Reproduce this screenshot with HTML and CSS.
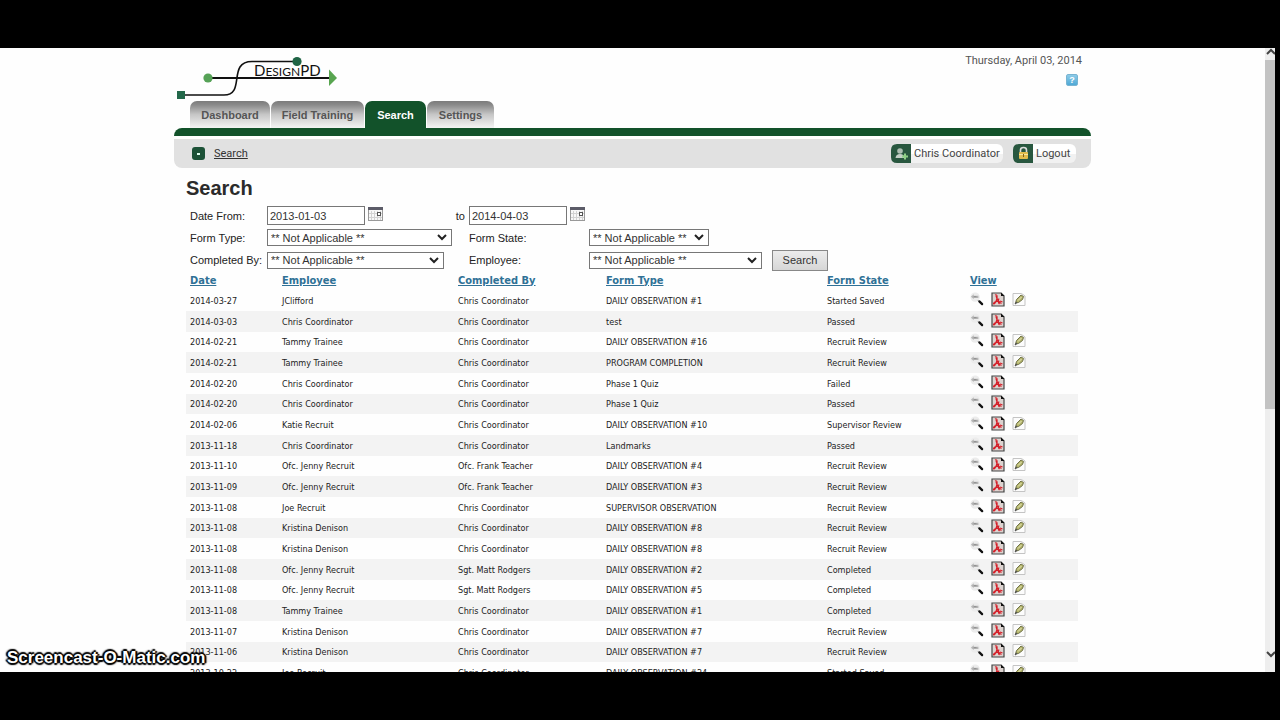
FILE: index.html
```html
<!DOCTYPE html>
<html lang="en">
<head>
    <meta charset="UTF-8">
    <meta name="viewport" content="width=device-width, initial-scale=1.0">
    <title>DesignPD - Search</title>
    <link rel="stylesheet" href="styles.css">
</head>
<body>
    <!-- shared icons -->
    <svg class="sprite" aria-hidden="true">
        <symbol id="icon-view" viewBox="0 0 15 15">
            <circle cx="5.500" cy="5" r="5" fill="#ececec"/>
            <path d="M1 4.500 L4 2 V3.500 H9 V6 H4 V7 Z" fill="#b5b5b5"/>
            <path d="M4 4.500 H7" stroke="#888" stroke-width="1"/>
            <path d="M8 8 L10 10" stroke="#bbb" stroke-width="1"/>
            <path d="M10 9.500 L13 12.500" stroke="#111" stroke-width="2.400" stroke-linecap="round"/>
        </symbol>
        <symbol id="icon-pdf" viewBox="0 0 14 15">
            <path d="M1 1 H10 L13 4 V14 H1 Z" fill="#dcd3d0" stroke="#444" stroke-width="1.200"/>
            <path d="M10 0.500 V4 H13.500 Z" fill="#111"/>
            <path d="M4 3 C6.500 2 6.500 5 5.500 8 C4.500 11 3 13 2.500 11.500 C3 9.500 6 9 8 9.500 M5 4 C6 7 8 10.500 10.500 11.500 M8 6.500 C7 8.500 7.500 11 8.500 12 M9 9 L11.500 10" fill="none" stroke="#d4202a" stroke-width="1.200"/>
        </symbol>
        <symbol id="icon-edit" viewBox="0 0 13 15">
            <path d="M0.500 1.500 H9 L12.500 4 V13.500 H0.500 Z" fill="#fcfcfc" stroke="#c4c4c4"/>
            <path d="M3 11 L4 7.500 L8.500 3 L11 4.500 L10 7.500 L6 10.500 Z" fill="#b4b56a" stroke="#70724a" stroke-width="1"/>
            <path d="M5.500 8.500 L9 5" stroke="#e9e9c0" stroke-width="1"/>
            <path d="M2.500 12 L4.500 10" stroke="#555" stroke-width="1.200"/>
        </symbol>
        <symbol id="icon-calendar" viewBox="0 0 15 14">
            <rect x="0.500" y="0.500" width="14" height="13" fill="#f7f7f7" stroke="#999"/>
            <rect x="0" y="0" width="15" height="3" fill="#5c5c68"/>
            <path d="M3.500 4 V13 M6.500 4 V13 M9.500 4 V13 M12.500 4 V13 M1 6.500 H14 M1 10.500 H14" stroke="#d2d2d2"/>
            <rect x="9.500" y="5.500" width="3" height="3" fill="#fff" stroke="#555"/>
        </symbol>
    </svg>

    <div class="screen">
        <main class="page">
            <div class="container">
                <header class="header">
                    <svg class="logo" viewBox="0 0 166 46" role="img" aria-label="DesignPD">
                        <path d="M6 43 H50 C72 43 53 9.500 78 9.500 H123" fill="none" stroke="#111" stroke-width="1.600"/>
                        <path d="M33 26 H156" stroke="#111" stroke-width="1.800"/>
                        <circle cx="34" cy="26" r="4.600" fill="#56a257"/>
                        <rect x="3" y="39" width="8" height="8" fill="#23684a"/>
                        <circle cx="123" cy="9.500" r="4.600" fill="#1f6445"/>
                        <path d="M155 17.500 L163 26 L155 34 Z" fill="#58a550"/>
                        <text x="80" y="24" class="logo-text">D<tspan class="logo-small">ESIGN</tspan>PD</text>
                    </svg>
                    <div class="header-info">
                        <span>Thursday, April 03, 2014</span>
                        <button type="button" class="help" aria-label="Help">?</button>
                    </div>
                </header>

                <nav class="tabs">
                    <a href="#" class="tab tab-dashboard">Dashboard</a>
                    <a href="#" class="tab tab-training">Field Training</a>
                    <a href="#" class="tab tab-search active">Search</a>
                    <a href="#" class="tab tab-settings">Settings</a>
                </nav>
                <div class="green-bar"></div>
                <div class="sub-bar">
                    <span class="bullet"></span>
                    <a href="#" class="crumb">Search</a>
                    <a href="#" class="pill user">
                        <svg viewBox="0 0 20 19" aria-hidden="true">
                            <path d="M6 0 H20 V19 H6 Q0 19 0 13 V6 Q0 0 6 0 Z" fill="#28573f"/>
                            <circle cx="9" cy="7" r="2.800" fill="#aebfb3"/>
                            <path d="M4.500 14 Q5 10 9 10 Q13 10 13.500 14 Z" fill="#c3cfc6"/>
                            <path d="M11 12.500 H17 M14 9.500 V15.500" stroke="#8fd086" stroke-width="2"/>
                        </svg>
                        <span>Chris Coordinator</span>
                    </a>
                    <a href="#" class="pill logout">
                        <svg viewBox="0 0 20 19" aria-hidden="true">
                            <path d="M6 0 H20 V19 H6 Q0 19 0 13 V6 Q0 0 6 0 Z" fill="#28573f"/>
                            <path d="M7.500 9 V6 Q7.500 3.500 10.500 3.500 Q13.500 3.500 13.500 6 V9" fill="none" stroke="#ddd" stroke-width="1.600"/>
                            <rect x="6" y="8" width="9" height="7" rx="1" fill="#e3bd4c"/>
                            <rect x="6" y="10" width="9" height="1" fill="#f8e7a0"/>
                            <rect x="10" y="10" width="1" height="3" fill="#82621b"/>
                        </svg>
                        <span>Logout</span>
                    </a>
                </div>

                <h1>Search</h1>
                <form class="search-form" onsubmit="return false">
                    <label for="dateFrom">Date From:</label>
                    <div class="field">
                        <input type="text" id="dateFrom" value="2013-01-03">
                        <svg class="calendar" aria-hidden="true"><use href="#icon-calendar"/></svg>
                        <label for="dateTo" class="to">to</label>
                    </div>
                    <div class="field wide">
                        <input type="text" id="dateTo" value="2014-04-03">
                        <svg class="calendar" aria-hidden="true"><use href="#icon-calendar"/></svg>
                    </div>

                    <label for="formType">Form Type:</label>
                    <div class="field">
                        <select id="formType"><option>** Not Applicable **</option></select>
                    </div>
                    <label for="formState">Form State:</label>
                    <div class="field last">
                        <select id="formState"><option>** Not Applicable **</option></select>
                    </div>

                    <label for="completedBy">Completed By:</label>
                    <div class="field">
                        <select id="completedBy"><option>** Not Applicable **</option></select>
                    </div>
                    <label for="employee">Employee:</label>
                    <div class="field">
                        <select id="employee"><option>** Not Applicable **</option></select>
                    </div>
                    <button type="submit" class="search-button">Search</button>
                </form>

                <table class="results">
                    <thead>
                        <tr>
                            <th class="col-date"><a href="#">Date</a></th>
                            <th class="col-employee"><a href="#">Employee</a></th>
                            <th class="col-completed"><a href="#">Completed By</a></th>
                            <th class="col-type"><a href="#">Form Type</a></th>
                            <th class="col-state"><a href="#">Form State</a></th>
                            <th class="col-view"><a href="#">View</a></th>
                        </tr>
                    </thead>
                    <tbody id="records"></tbody>
                </table>
            </div>
        </main>
        <div class="scrollbar" aria-hidden="true">
            <svg viewBox="0 0 10 12"><path d="M2 6 L6 2 L10 6" fill="none" stroke="#444" stroke-width="2"/></svg>
            <div class="thumb"></div>
            <svg class="down" viewBox="0 0 10 12"><path d="M2 2 L6 6 L10 2" fill="none" stroke="#444" stroke-width="2"/></svg>
        </div>
        <div class="watermark">Screencast-O-Matic.com</div>
    </div>

    <script>
        // date, employee, completed by, form type, form state, editable
        const records = [
            ['2014-03-27', 'JClifford', 'Chris Coordinator', 'DAILY OBSERVATION #1', 'Started Saved', true],
            ['2014-03-03', 'Chris Coordinator', 'Chris Coordinator', 'test', 'Passed', false],
            ['2014-02-21', 'Tammy Trainee', 'Chris Coordinator', 'DAILY OBSERVATION #16', 'Recruit Review', true],
            ['2014-02-21', 'Tammy Trainee', 'Chris Coordinator', 'PROGRAM COMPLETION', 'Recruit Review', true],
            ['2014-02-20', 'Chris Coordinator', 'Chris Coordinator', 'Phase 1 Quiz', 'Failed', false],
            ['2014-02-20', 'Chris Coordinator', 'Chris Coordinator', 'Phase 1 Quiz', 'Passed', false],
            ['2014-02-06', 'Katie Recruit', 'Chris Coordinator', 'DAILY OBSERVATION #10', 'Supervisor Review', true],
            ['2013-11-18', 'Chris Coordinator', 'Chris Coordinator', 'Landmarks', 'Passed', false],
            ['2013-11-10', 'Ofc. Jenny Recruit', 'Ofc. Frank Teacher', 'DAILY OBSERVATION #4', 'Recruit Review', true],
            ['2013-11-09', 'Ofc. Jenny Recruit', 'Ofc. Frank Teacher', 'DAILY OBSERVATION #3', 'Recruit Review', true],
            ['2013-11-08', 'Joe Recruit', 'Chris Coordinator', 'SUPERVISOR OBSERVATION', 'Recruit Review', true],
            ['2013-11-08', 'Kristina Denison', 'Chris Coordinator', 'DAILY OBSERVATION #8', 'Recruit Review', true],
            ['2013-11-08', 'Kristina Denison', 'Chris Coordinator', 'DAILY OBSERVATION #8', 'Recruit Review', true],
            ['2013-11-08', 'Ofc. Jenny Recruit', 'Sgt. Matt Rodgers', 'DAILY OBSERVATION #2', 'Completed', true],
            ['2013-11-08', 'Ofc. Jenny Recruit', 'Sgt. Matt Rodgers', 'DAILY OBSERVATION #5', 'Completed', true],
            ['2013-11-08', 'Tammy Trainee', 'Chris Coordinator', 'DAILY OBSERVATION #1', 'Completed', true],
            ['2013-11-07', 'Kristina Denison', 'Chris Coordinator', 'DAILY OBSERVATION #7', 'Recruit Review', true],
            ['2013-11-06', 'Kristina Denison', 'Chris Coordinator', 'DAILY OBSERVATION #7', 'Recruit Review', true],
            ['2013-10-22', 'Joe Recruit', 'Chris Coordinator', 'DAILY OBSERVATION #24', 'Started Saved', true]
        ];

        function iconLink(name, label) {
            return `<a href="#" class="icon-${name}" aria-label="${label}"><svg><use href="#icon-${name}"/></svg></a>`;
        }

        document.getElementById('records').innerHTML = records.map(record => {
            const cells = record.slice(0, 5).map(text => `<td>${text}</td>`).join('');
            const edit = record[5] ? iconLink('edit', 'Edit') : '';
            return `<tr>${cells}<td><div class="actions">${iconLink('view', 'View')}${iconLink('pdf', 'PDF')}${edit}</div></td></tr>`;
        }).join('');
    </script>
</body>
</html>
```
FILE: styles.css
```css
* {
    box-sizing: border-box;
}
body {
    font-family: "Liberation Sans", Arial, sans-serif;
    font-size: 11px;
    color: #222;
    margin: 0;
    padding: 48px 5px 48px 0;
    height: 100vh;
    background-color: #000;
}
.sprite {
    display: none;
}
.screen {
    position: relative;
    display: flex;
    height: 100%;
    background: #fefefe;
}
.page {
    flex: 1;
    overflow: hidden;
}
.container {
    max-width: 917px;
    margin: auto;
}

/* header */
.header {
    display: flex;
    justify-content: space-between;
    height: 53px;
    padding-right: 9px;
}
.logo {
    width: 166px;
    height: 46px;
    margin-top: 4px;
    overflow: visible;
}
.logo-text {
    font-family: Lato, sans-serif;
    font-size: 15px;
    fill: #111;
}
.logo-small {
    font-size: 12px;
}
.header-info {
    display: flex;
    flex-direction: column;
    align-items: flex-end;
    gap: 7px;
    padding-top: 6px;
    font-family: Roboto, sans-serif;
    line-height: 13px;
    color: #555;
}
.help {
    width: 12px;
    height: 12px;
    margin-right: 4px;
    padding: 0;
    border: 1px solid #78b4d2;
    border-radius: 2px;
    background: linear-gradient(#8ccbe8, #4fa9d6);
    color: #fff;
    font-size: 9px;
    font-weight: bold;
    line-height: 10px;
}

/* navigation */
.tabs {
    display: flex;
    gap: 1px;
    height: 27px;
    padding-left: 16px;
}
.tab {
    border-radius: 7px 7px 0 0;
    background: linear-gradient(#7b7b7b, #8b8b8b 15%, #c6c6c6 50%, #f4f4f4);
    color: #555;
    font-weight: bold;
    line-height: 29px;
    text-align: center;
    text-decoration: none;
}
.tab.active {
    background: #12522a;
    color: #fff;
}
.tab-dashboard {
    width: 80px;
}
.tab-training {
    width: 93px;
}
.tab-search {
    width: 61px;
}
.tab-settings {
    width: 67px;
}
.green-bar {
    height: 8px;
    border-radius: 8px 8px 0 0;
    background: #12522a;
}
.sub-bar {
    display: flex;
    align-items: center;
    height: 29px;
    margin-top: 3px;
    padding: 0 15px 0 18px;
    border-radius: 0 0 8px 8px;
    background: #e1e1e1;
    font-family: Roboto, sans-serif;
}
.bullet {
    display: flex;
    align-items: center;
    justify-content: center;
    width: 13px;
    height: 13px;
    border-radius: 3px;
    background: #1c5237;
}
.bullet::after {
    content: "";
    width: 3px;
    height: 2px;
    background: #dfe;
}
.crumb {
    margin: 0 auto 0 9px;
    color: #333;
}
.pill {
    display: flex;
    align-items: center;
    height: 19px;
    border-radius: 6px;
    background: linear-gradient(#fff 50%, #f1f1f1 50%);
    color: #444;
    text-decoration: none;
}
.pill svg {
    width: 20px;
    height: 19px;
    margin-right: 3px;
}
.user {
    width: 112px;
    margin-right: 10px;
}
.logout {
    width: 63px;
}

/* search form */
h1 {
    margin: 8px 12px 5px;
    color: #2b2b2b;
    font-size: 20px;
    line-height: 24px;
}
.search-form {
    display: grid;
    grid-template-columns: 77px 202px 120px 183px auto;
    grid-template-rows: 21px 23px 22px;
    align-items: center;
    justify-content: start;
    margin-left: 16px;
}
.field {
    display: flex;
    align-items: center;
}
.wide {
    grid-column: span 3;
}
.last {
    grid-column: span 2;
}
.to {
    margin: 0 4px 0 auto;
}
.search-form input,
.search-form select {
    border: 1px solid #777;
    border-radius: 0;
    background-color: #fff;
    color: #333;
    font-family: inherit;
    font-size: 11px;
}
.search-form input {
    width: 98px;
    height: 19px;
    padding: 0 2px;
}
.search-form select {
    appearance: none;
    width: 185px;
    height: 17px;
    padding: 0 3px;
    background-image: url("data:image/svg+xml,%3Csvg xmlns='http://www.w3.org/2000/svg' width='10' height='7'%3E%3Cpath d='M1 1l4 4 4-4' fill='none' stroke='%23222' stroke-width='2'/%3E%3C/svg%3E");
    background-repeat: no-repeat;
    background-position: right 4px center;
}
.search-form #completedBy {
    width: 177px;
}
.search-form #formState {
    width: 120px;
}
.search-form #employee {
    width: 173px;
}
.calendar {
    width: 15px;
    height: 14px;
    margin: 0 0 4px 3px;
}
.search-button {
    width: 56px;
    height: 21px;
    padding: 0;
    border: 1px solid #888;
    background: linear-gradient(#ececec, #d6d6d6);
    color: #333;
    font-family: inherit;
    font-size: 11px;
}

/* results */
.results {
    width: 892px;
    margin-left: 12px;
    border-collapse: collapse;
    table-layout: fixed;
    font-family: "DejaVu Sans Condensed", "DejaVu Sans", sans-serif;
    font-size: 9px;
    white-space: nowrap;
}
.results th,
.results td {
    padding: 0 0 0 4px;
    text-align: left;
}
.results th {
    height: 19px;
    font-size: 11px;
    line-height: 18px;
}
.results th a {
    color: #2f7196;
}
.col-date {
    width: 92px;
}
.col-employee {
    width: 176px;
}
.col-completed {
    width: 148px;
}
.col-type {
    width: 221px;
}
.col-state {
    width: 143px;
}
.results tbody tr {
    height: 21px;
}
.results tbody tr:nth-child(3n) {
    height: 20px;
}
.results tbody tr:nth-child(even) {
    background: #f3f3f3;
}
.actions {
    display: flex;
    gap: 7px;
    height: 18px;
}
.actions a,
.actions svg {
    display: block;
    width: 14px;
    height: 15px;
}

/* recorded window edge */
.scrollbar {
    display: flex;
    flex-direction: column;
    width: 10px;
    background: #eee;
}
.scrollbar svg {
    width: 10px;
    height: 12px;
}
.thumb {
    height: 56%;
    background: #c3c3c3;
}
.scrollbar .down {
    margin: auto 0 10px;
}
.watermark {
    position: absolute;
    bottom: 4px;
    left: 7px;
    color: #fff;
    font-size: 17px;
    font-weight: bold;
    line-height: 20px;
    text-shadow: -2px 0 1px #000, 2px 0 1px #000, 0 -2px 1px #000, 0 2px 1px #000, 1px 1px 2px #000, -1px -1px 2px #000;
}
```
